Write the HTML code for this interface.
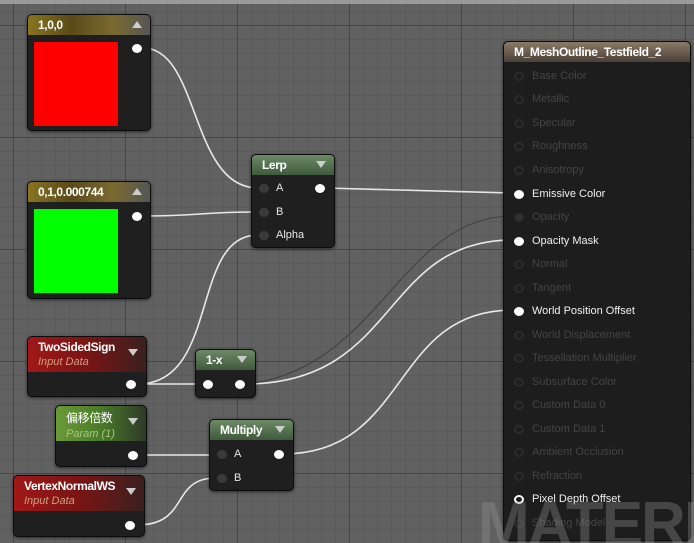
<!DOCTYPE html>
<html><head><meta charset="utf-8"><style>
*{margin:0;padding:0;box-sizing:border-box}
html,body{width:694px;height:543px;overflow:hidden}
body{position:relative;font-family:"Liberation Sans","Noto Sans CJK SC",sans-serif;
background-color:#616161;
background-image:
linear-gradient(90deg,#474747 0 1px,transparent 1px),
linear-gradient(0deg,#474747 0 1px,transparent 1px),
linear-gradient(90deg,#5a5a5a 0 1px,transparent 1px),
linear-gradient(0deg,#5a5a5a 0 1px,transparent 1px);
background-size:112px 112px,112px 112px,14px 14px,14px 14px;
background-position:13px 0,0 26px,13px 0,0 12px;}
.top{position:absolute;left:0;top:0;width:694px;height:4px;background:#9a9a9a}
.node{position:absolute;background:#1e1f1e;border:1px solid #0c0c0c;border-radius:5px;box-shadow:0 1px 3px rgba(0,0,0,.6)}
.hd{position:absolute;left:0;top:0;right:0;border-radius:4px 4px 0 0;color:#fff;font-weight:bold;font-size:12px;letter-spacing:-0.4px;padding:3px 0 0 10px;white-space:nowrap}
.gold{background:linear-gradient(90deg,#8a7420,#5a4a18 35%,#7a6a30 70%,#555 100%)}
.grn{background:linear-gradient(180deg,#6c8a66,#3f5a3c)}
.red{background:linear-gradient(90deg,#a01818,#7a1414 50%,#3a2020 100%)}
.lgrn{background:linear-gradient(90deg,#6a9a38,#4a7a28 50%,#2f3a2a 100%)}
.sub{font-style:italic;font-weight:normal;font-size:11px;letter-spacing:0;color:#d0a080;display:block;margin-top:2px}
.tri{position:absolute;right:8px;width:0;height:0;border-left:5px solid transparent;border-right:5px solid transparent}
.up{border-bottom:7px solid #ccc}
.dn{border-top:7px solid #ccc}
.lbl{position:absolute;color:#e8e8e8;font-size:11px}
.pin{position:absolute;width:10px;height:9px;border-radius:50%;background:#fff}
.pin.off{background:#3a3a3a}
.r{position:absolute;left:28px;font-size:11px;color:#444}
.r.on{color:#f0f0f0}
.rp{position:absolute;left:10px;width:10px;height:9px;border-radius:50%;border:2px solid #2c2c2c}
.rp.on{background:#fff;border-color:#fff}
</style></head><body>
<div class="top"></div>
<svg style="position:absolute;left:0;top:0" width="694" height="543" fill="none" stroke="#e8e8e8" stroke-width="1.6">
<path d="M143 48 C200 48,190 188,258 188"/>
<path d="M143 216 C200 216,200 212,258 212"/>
<path d="M138 384 C220 384,190 235,258 235"/>
<path d="M138 384 L202 384"/>
<path d="M245 384 C400 384,380 240,513 240"/>
<path d="M325 188 L513 193"/>
<path d="M140 455 L216 455"/>
<path d="M137 525 C190 525,170 478,216 478"/>
<path d="M283 454 C410 454,390 310,513 310"/>
<path d="M245 384 C380 370,400 216,513 216" stroke="#444" stroke-width="1.2"/>
</svg>
<div class="node" style="left:27px;top:14px;width:124px;height:117px">
<div class="hd gold" style="height:20px">1,0,0<span class="tri up" style="top:6px"></span></div>
<div style="position:absolute;left:6px;top:27px;width:84px;height:84px;background:#f00"></div>
<div class="pin" style="left:104px;top:29px"></div></div>
<div class="node" style="left:27px;top:181px;width:124px;height:118px">
<div class="hd gold" style="height:20px">0,1,0.000744<span class="tri up" style="top:6px"></span></div>
<div style="position:absolute;left:6px;top:27px;width:84px;height:84px;background:#0f0"></div>
<div class="pin" style="left:104px;top:30px"></div></div>
<div class="node" style="left:251px;top:154px;width:84px;height:94px">
<div class="hd grn" style="height:20px">Lerp<span class="tri dn" style="top:6px"></span></div>
<div class="pin off" style="left:7px;top:29px"></div><span class="lbl" style="left:24px;top:27px">A</span>
<div class="pin off" style="left:7px;top:53px"></div><span class="lbl" style="left:24px;top:51px">B</span>
<div class="pin off" style="left:7px;top:76px"></div><span class="lbl" style="left:24px;top:74px">Alpha</span>
<div class="pin" style="left:63px;top:29px"></div></div>
<div class="node" style="left:27px;top:336px;width:120px;height:61px">
<div class="hd red" style="height:35px">TwoSidedSign<span class="sub">Input Data</span><span class="tri dn" style="top:12px"></span></div>
<div class="pin" style="left:98px;top:43px"></div></div>
<div class="node" style="left:195px;top:349px;width:61px;height:49px">
<div class="hd grn" style="height:20px">1-x<span class="tri dn" style="top:6px"></span></div>
<div class="pin" style="left:7px;top:30px"></div>
<div class="pin" style="left:39px;top:30px"></div></div>
<div class="node" style="left:55px;top:405px;width:92px;height:62px">
<div class="hd lgrn" style="height:35px;font-weight:normal">偏移倍数<span class="sub" style="color:#a8c880">Param (1)</span><span class="tri dn" style="top:12px"></span></div>
<div class="pin" style="left:72px;top:45px"></div></div>
<div class="node" style="left:209px;top:419px;width:85px;height:72px">
<div class="hd grn" style="height:20px">Multiply<span class="tri dn" style="top:6px"></span></div>
<div class="pin off" style="left:7px;top:30px"></div><span class="lbl" style="left:24px;top:28px">A</span>
<div class="pin off" style="left:7px;top:54px"></div><span class="lbl" style="left:24px;top:52px">B</span>
<div class="pin" style="left:64px;top:30px"></div></div>
<div class="node" style="left:13px;top:475px;width:132px;height:62px">
<div class="hd red" style="height:35px">VertexNormalWS<span class="sub">Input Data</span><span class="tri dn" style="top:12px"></span></div>
<div class="pin" style="left:111px;top:45px"></div></div>
<div class="node" style="left:503px;top:41px;width:188px;height:500px;background:#1c1d1c;overflow:hidden">
<div class="hd" style="height:20px;background:linear-gradient(180deg,#8a7a68,#4a4038)">M_MeshOutline_Testfield_2</div>
<div class="rp" style="top:30px"></div><span class="r" style="top:28px">Base Color</span>
<div class="rp" style="top:53px"></div><span class="r" style="top:51px">Metallic</span>
<div class="rp" style="top:77px"></div><span class="r" style="top:75px">Specular</span>
<div class="rp" style="top:100px"></div><span class="r" style="top:98px">Roughness</span>
<div class="rp" style="top:124px"></div><span class="r" style="top:122px">Anisotropy</span>
<div class="rp on" style="top:148px"></div><span class="r on" style="top:146px">Emissive Color</span>
<div class="rp" style="top:171px;background:#333"></div><span class="r" style="top:169px">Opacity</span>
<div class="rp on" style="top:195px"></div><span class="r on" style="top:193px">Opacity Mask</span>
<div class="rp" style="top:218px"></div><span class="r" style="top:216px">Normal</span>
<div class="rp" style="top:242px"></div><span class="r" style="top:240px">Tangent</span>
<div class="rp on" style="top:265px"></div><span class="r on" style="top:263px">World Position Offset</span>
<div class="rp" style="top:289px"></div><span class="r" style="top:287px">World Displacement</span>
<div class="rp" style="top:312px"></div><span class="r" style="top:310px">Tessellation Multiplier</span>
<div class="rp" style="top:336px"></div><span class="r" style="top:334px">Subsurface Color</span>
<div class="rp" style="top:359px"></div><span class="r" style="top:357px">Custom Data 0</span>
<div class="rp" style="top:383px"></div><span class="r" style="top:381px">Custom Data 1</span>
<div class="rp" style="top:406px"></div><span class="r" style="top:404px">Ambient Occlusion</span>
<div class="rp" style="top:430px"></div><span class="r" style="top:428px">Refraction</span>
<div class="rp" style="top:453px;border-color:#fff"></div><span class="r on" style="top:451px">Pixel Depth Offset</span>
<div class="rp" style="top:477px"></div><span class="r" style="top:475px">Shading Model</span>
</div>
<div style="position:absolute;left:478px;top:490px;font-size:62px;line-height:70px;font-weight:bold;color:rgba(150,150,150,.35);letter-spacing:-2px;white-space:nowrap;pointer-events:none">MATERIAL</div>
</body></html>
